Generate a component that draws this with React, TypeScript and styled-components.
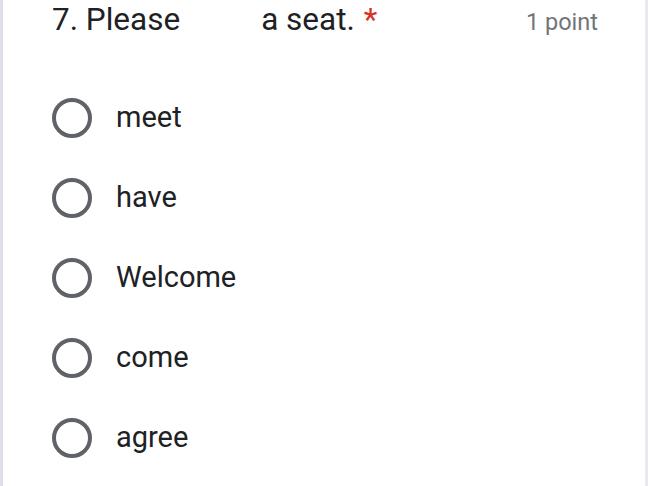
import * as React from 'react';
import styled, { createGlobalStyle } from 'styled-components';

const GlobalStyle = createGlobalStyle`
  html, body {
    margin: 0;
    padding: 0;
    background: #ffffff;
    font-family: Roboto, "Liberation Sans", Arial, sans-serif;
  }
`;

const Card = styled.div`
  box-sizing: border-box;
  width: 648px;
  height: 486px;
  overflow: hidden;
  border-left: 3px solid #dfdfeb;
  border-right: 3px solid #e8e8ee;
  padding: 0 47px 0 49px;
  background: #fff;
`;

const Header = styled.div`
  box-sizing: border-box;
  display: flex;
  align-items: baseline;
  justify-content: space-between;
  padding-top: 4px;
  height: 62px;
  line-height: 1;
`;

const Title = styled.div`
  font-size: 31.5px;
  color: #202124;
`;

const Blank = styled.span`
  display: inline-block;
  width: 81px;
`;

const Star = styled.span`
  color: #d93025;
  margin-left: 9px;
`;

const Points = styled.div`
  font-size: 23.5px;
  color: #70757a;
`;

const Options = styled.div`
  display: flex;
  flex-direction: column;
  gap: 40px;
  padding-top: 36px;
`;

const Option = styled.label`
  display: flex;
  align-items: center;
  gap: 24px;
  height: 40px;
`;

const Circle = styled.span`
  box-sizing: border-box;
  width: 40px;
  height: 40px;
  border-radius: 50%;
  border: 4px solid #5f6368;
  flex-shrink: 0;
`;

const Label = styled.span`
  font-size: 29px;
  color: #202124;
  margin-top: -2px;
`;

const options = ['meet', 'have', 'Welcome', 'come', 'agree'];

export default function App() {
  return (
    <>
      <GlobalStyle />
      <Card>
        <Header>
          <Title>
            7. Please<Blank />a seat.<Star>*</Star>
          </Title>
          <Points>1 point</Points>
        </Header>
        <Options>
          {options.map(o => (
            <Option key={o}>
              <Circle />
              <Label>{o}</Label>
            </Option>
          ))}
        </Options>
      </Card>
    </>
  );
}
